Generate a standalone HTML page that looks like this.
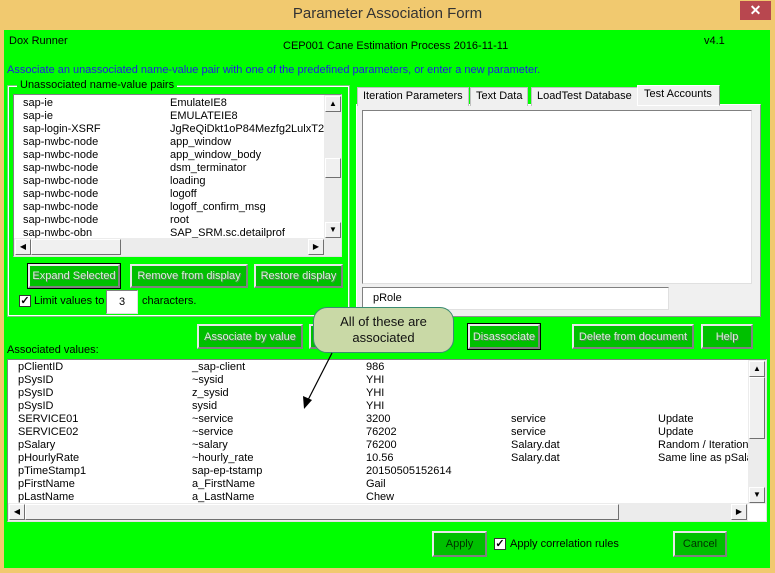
<!DOCTYPE html>
<html><head><meta charset="utf-8"><style>
*{margin:0;padding:0;box-sizing:border-box}
body{width:775px;height:573px;background:#f1c96f;font-family:"Liberation Sans",sans-serif;font-size:11px;color:#000;position:relative;overflow:hidden}
.a{position:absolute;white-space:nowrap}
.g{position:absolute;left:4px;top:30px;width:766px;height:538px;background:#00ff00}
.btn{position:absolute;background:#00c000;border:2px solid #e8e8e8;border-right-color:#808080;border-bottom-color:#808080;color:#d8f0d8;text-align:center;font-size:11px;display:flex;align-items:center;justify-content:center;text-shadow:1px 1px 0 #608060}
.btn.dk{color:#003000;text-shadow:none}
.btn.sel{outline:1px solid #000}
.white{position:absolute;background:#fff;border:1px solid #808080;border-right-color:#e0e0e0;border-bottom-color:#e0e0e0}
.sb{position:absolute;background:#ececec}
.ar{position:absolute;width:16px;height:16px;background:#f0f0f0;border:1px solid #fff;border-right-color:#707070;border-bottom-color:#707070;font-size:8px;line-height:14px;text-align:center}
.chk{position:absolute;width:12px;height:12px;background:#fff;border:1px solid #333;font-size:11px;line-height:10px;text-align:center;font-weight:bold}
</style></head><body>
<div class="a" style="left:0;top:5px;width:775px;text-align:center;font-size:15px;color:#333">Parameter Association Form</div>
<div class="a" style="left:740px;top:1px;width:31px;height:19px;background:#b8474f;color:#fff;font-size:14px;text-align:center;line-height:18px;font-weight:bold">✕</div>
<div class="g"></div>
<div class="a" style="left:9px;top:35px">Dox Runner</div>
<div class="a" style="left:283px;top:40px">CEP001 Cane Estimation Process 2016-11-11</div>
<div class="a" style="left:704px;top:35px">v4.1</div>
<div class="a" style="left:7px;top:64px;color:#2020e0">Associate an unassociated name-value pair with one of the predefined parameters, or enter a new parameter.</div>
<div class="a" style="left:8px;top:86px;width:341px;height:230px;border:1px solid #fff;outline:1px solid #80c080"></div>
<div class="a" style="left:17px;top:79px;background:#00ff00;padding:0 3px">Unassociated name-value pairs</div>
<div class="white" style="left:13px;top:94px;width:329px;height:163px"></div>
<div class="a" style="left:23px;top:97px;line-height:13px">sap-ie<br>sap-ie<br>sap-login-XSRF<br>sap-nwbc-node<br>sap-nwbc-node<br>sap-nwbc-node<br>sap-nwbc-node<br>sap-nwbc-node<br>sap-nwbc-node<br>sap-nwbc-node<br>sap-nwbc-obn</div>
<div class="a" style="left:170px;top:97px;line-height:13px;width:154px;overflow:hidden">EmulateIE8<br>EMULATEIE8<br>JgReQiDkt1oP84Mezfg2LulxT2b5<br>app_window<br>app_window_body<br>dsm_terminator<br>loading<br>logoff<br>logoff_confirm_msg<br>root<br>SAP_SRM.sc.detailprof</div>
<div class="sb" style="left:324px;top:95px;width:17px;height:143px"></div>
<div class="ar" style="left:325px;top:96px">▲</div>
<div class="ar" style="left:325px;top:158px;height:20px"></div>
<div class="ar" style="left:325px;top:222px">▼</div>
<div class="sb" style="left:14px;top:238px;width:327px;height:18px"></div>
<div class="ar" style="left:15px;top:239px">◀</div>
<div class="ar" style="left:31px;top:239px;width:90px"></div>
<div class="ar" style="left:308px;top:239px">▶</div>
<div class="btn sel" style="left:28px;top:264px;width:92px;height:24px">Expand Selected</div>
<div class="btn" style="left:130px;top:264px;width:118px;height:24px">Remove from display</div>
<div class="btn" style="left:254px;top:264px;width:89px;height:24px">Restore display</div>
<div class="chk" style="left:19px;top:295px">✓</div>
<div class="a" style="left:34px;top:295px">Limit values to</div>
<div class="white" style="left:106px;top:290px;width:32px;height:24px;text-align:center;line-height:22px">3</div>
<div class="a" style="left:142px;top:295px">characters.</div>
<div class="a" style="left:356px;top:104px;width:405px;height:213px;background:#f0f0f0;border:1px solid #fff;border-right-color:#909090;border-bottom-color:#909090"></div>
<div class="a" style="left:357px;top:87px;height:19px;background:#f0f0f0;border:1px solid #c0c0c0;border-bottom:none;padding:2px 5px">Iteration Parameters</div>
<div class="a" style="left:470px;top:87px;height:19px;background:#f0f0f0;border:1px solid #c0c0c0;border-bottom:none;padding:2px 5px">Text Data</div>
<div class="a" style="left:531px;top:87px;height:19px;background:#f0f0f0;border:1px solid #c0c0c0;border-bottom:none;padding:2px 5px">LoadTest Database</div>
<div class="a" style="left:637px;top:85px;width:83px;height:21px;background:#f0f0f0;border:1px solid #fff;border-right-color:#909090;padding:2px 6px">Test Accounts</div>
<div class="white" style="left:362px;top:110px;width:390px;height:174px"></div>
<div class="white" style="left:362px;top:287px;width:307px;height:23px;line-height:21px;padding-left:10px">pRole</div>
<div class="btn" style="left:197px;top:324px;width:106px;height:25px">Associate by value</div>
<div class="btn" style="left:309px;top:324px;width:30px;height:25px"></div>
<div class="btn sel" style="left:468px;top:324px;width:72px;height:25px">Disassociate</div>
<div class="btn" style="left:572px;top:324px;width:122px;height:25px">Delete from document</div>
<div class="btn" style="left:701px;top:324px;width:52px;height:25px">Help</div>
<div class="a" style="left:313px;top:307px;width:141px;height:46px;background:#c9d9a6;border:1px solid #3b8b72;border-radius:14px;text-align:center;font-size:13px;line-height:16px;padding-top:6px;color:#111">All of these are<br>associated</div>
<div class="a" style="left:7px;top:344px">Associated values:</div>
<div class="white" style="left:7px;top:359px;width:760px;height:163px"></div>
<div class="a" style="left:18px;top:361px;line-height:13px">pClientID<br>pSysID<br>pSysID<br>pSysID<br>SERVICE01<br>SERVICE02<br>pSalary<br>pHourlyRate<br>pTimeStamp1<br>pFirstName<br>pLastName</div>
<div class="a" style="left:192px;top:361px;line-height:13px">_sap-client<br>~sysid<br>z_sysid<br>sysid<br>~service<br>~service<br>~salary<br>~hourly_rate<br>sap-ep-tstamp<br>a_FirstName<br>a_LastName</div>
<div class="a" style="left:366px;top:361px;line-height:13px">986<br>YHI<br>YHI<br>YHI<br>3200<br>76202<br>76200<br>10.56<br>20150505152614<br>Gail<br>Chew</div>
<div class="a" style="left:511px;top:413px;line-height:13px">service<br>service<br>Salary.dat<br>Salary.dat</div>
<div class="a" style="left:658px;top:413px;line-height:13px;width:90px;overflow:hidden">Update<br>Update<br>Random / Iteration<br>Same line as pSalary</div>
<div class="sb" style="left:748px;top:360px;width:18px;height:144px"></div>
<div class="ar" style="left:749px;top:361px">▲</div>
<div class="ar" style="left:749px;top:377px;height:62px"></div>
<div class="ar" style="left:749px;top:487px">▼</div>
<div class="sb" style="left:8px;top:503px;width:740px;height:18px"></div>
<div class="ar" style="left:9px;top:504px">◀</div>
<div class="ar" style="left:25px;top:504px;width:594px"></div>
<div class="ar" style="left:731px;top:504px">▶</div>
<div class="btn dk" style="left:432px;top:531px;width:55px;height:26px">Apply</div>
<div class="chk" style="left:494px;top:538px">✓</div>
<div class="a" style="left:510px;top:538px">Apply correlation rules</div>
<div class="btn dk" style="left:673px;top:531px;width:54px;height:26px">Cancel</div>
<svg class="a" style="left:0;top:0" width="775" height="573"><line x1="332" y1="353" x2="308" y2="400" stroke="#000" stroke-width="1.2"/><polygon points="304,409 303,396 312,400" fill="#000"/></svg>
</body></html>
